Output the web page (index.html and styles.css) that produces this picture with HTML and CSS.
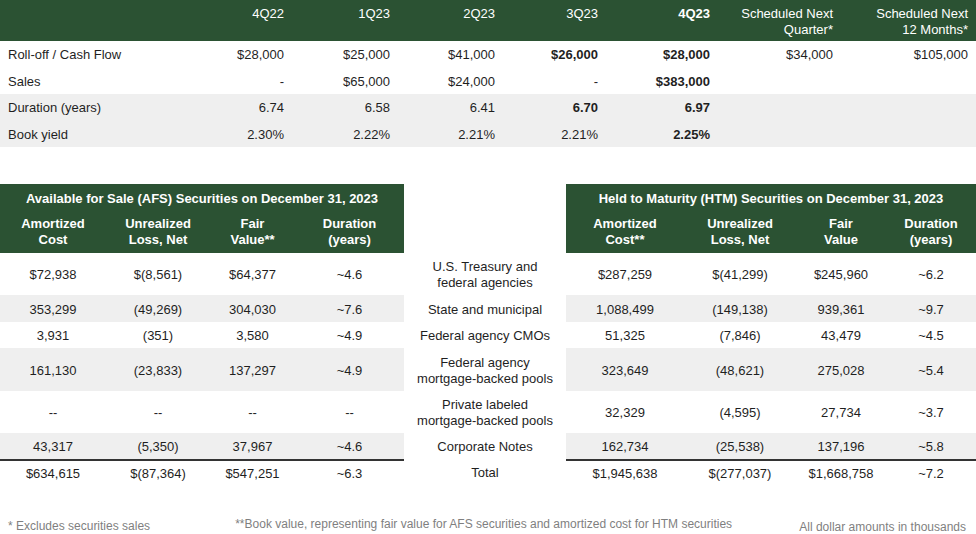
FILE: index.html
```html
<!DOCTYPE html>
<html>
<head>
<meta charset="utf-8">
<link rel="stylesheet" href="styles.css">
</head>
<body>
<div class="page">
  <div class="summary">
    <div class="srow shead">
      <div></div>
      <div class="num">4Q22</div>
      <div class="num">1Q23</div>
      <div class="num">2Q23</div>
      <div class="num">3Q23</div>
      <div class="num b">4Q23</div>
      <div class="num">Scheduled Next<br>Quarter*</div>
      <div class="num">Scheduled Next<br>12 Months*</div>
    </div>
    <div class="srow h26">
      <div>Roll-off / Cash Flow</div>
      <div class="num">$28,000</div>
      <div class="num">$25,000</div>
      <div class="num">$41,000</div>
      <div class="num b">$26,000</div>
      <div class="num b">$28,000</div>
      <div class="num">$34,000</div>
      <div class="num">$105,000</div>
    </div>
    <div class="srow h27">
      <div>Sales</div>
      <div class="num">-</div>
      <div class="num">$65,000</div>
      <div class="num">$24,000</div>
      <div class="num">-</div>
      <div class="num b">$383,000</div>
      <div></div>
      <div></div>
    </div>
    <div class="srow h26 alt">
      <div>Duration (years)</div>
      <div class="num">6.74</div>
      <div class="num">6.58</div>
      <div class="num">6.41</div>
      <div class="num b">6.70</div>
      <div class="num b">6.97</div>
      <div></div>
      <div></div>
    </div>
    <div class="srow h27 alt">
      <div>Book yield</div>
      <div class="num">2.30%</div>
      <div class="num">2.22%</div>
      <div class="num">2.21%</div>
      <div class="num">2.21%</div>
      <div class="num b">2.25%</div>
      <div></div>
      <div></div>
    </div>
  </div>

  <div class="sec">
    <div class="c g title afs-title">Available for Sale (AFS) Securities on December 31, 2023</div>
    <div class="c"></div>
    <div class="c g title htm-title">Held to Maturity (HTM) Securities on December 31, 2023</div>

    <div class="c g ch">Amortized<br>Cost</div>
    <div class="c g ch">Unrealized<br>Loss, Net</div>
    <div class="c g ch">Fair<br>Value**</div>
    <div class="c g ch">Duration<br>(years)</div>
    <div class="c"></div>
    <div class="c g ch">Amortized<br>Cost**</div>
    <div class="c g ch">Unrealized<br>Loss, Net</div>
    <div class="c g ch">Fair<br>Value</div>
    <div class="c g ch">Duration<br>(years)</div>

    <div class="c">$72,938</div>
    <div class="c">$(8,561)</div>
    <div class="c">$64,377</div>
    <div class="c">~4.6</div>
    <div class="c lbl">U.S. Treasury and<br>federal agencies</div>
    <div class="c">$287,259</div>
    <div class="c">$(41,299)</div>
    <div class="c">$245,960</div>
    <div class="c">~6.2</div>

    <div class="c a">353,299</div>
    <div class="c a">(49,269)</div>
    <div class="c a">304,030</div>
    <div class="c a">~7.6</div>
    <div class="c lbl">State and municipal</div>
    <div class="c a">1,088,499</div>
    <div class="c a">(149,138)</div>
    <div class="c a">939,361</div>
    <div class="c a">~9.7</div>

    <div class="c">3,931</div>
    <div class="c">(351)</div>
    <div class="c">3,580</div>
    <div class="c">~4.9</div>
    <div class="c lbl">Federal agency CMOs</div>
    <div class="c">51,325</div>
    <div class="c">(7,846)</div>
    <div class="c">43,479</div>
    <div class="c">~4.5</div>

    <div class="c a">161,130</div>
    <div class="c a">(23,833)</div>
    <div class="c a">137,297</div>
    <div class="c a">~4.9</div>
    <div class="c lbl">Federal agency<br>mortgage-backed pools</div>
    <div class="c a">323,649</div>
    <div class="c a">(48,621)</div>
    <div class="c a">275,028</div>
    <div class="c a">~5.4</div>

    <div class="c">--</div>
    <div class="c">--</div>
    <div class="c">--</div>
    <div class="c">--</div>
    <div class="c lbl">Private labeled<br>mortgage-backed pools</div>
    <div class="c">32,329</div>
    <div class="c">(4,595)</div>
    <div class="c">27,734</div>
    <div class="c">~3.7</div>

    <div class="c a">43,317</div>
    <div class="c a">(5,350)</div>
    <div class="c a">37,967</div>
    <div class="c a">~4.6</div>
    <div class="c lbl">Corporate Notes</div>
    <div class="c a">162,734</div>
    <div class="c a">(25,538)</div>
    <div class="c a">137,196</div>
    <div class="c a">~5.8</div>

    <div class="c t">$634,615</div>
    <div class="c t">$(87,364)</div>
    <div class="c t">$547,251</div>
    <div class="c t">~6.3</div>
    <div class="c lbl">Total</div>
    <div class="c t">$1,945,638</div>
    <div class="c t">$(277,037)</div>
    <div class="c t">$1,668,758</div>
    <div class="c t">~7.2</div>
  </div>

  <div class="foot">
    <span class="f1">* Excludes securities sales</span>
    <span class="f2">**Book value, representing fair value for AFS securities and amortized cost for HTM securities</span>
    <span class="f3">All dollar amounts in thousands</span>
  </div>
</div>
</body>
</html>
```

FILE: styles.css
```css
html, body {
  margin: 0;
  padding: 0;
  background: #ffffff;
}
body {
  font-family: "Liberation Sans", Arial, sans-serif;
  font-size: 13px;
  color: #1f1f1f;
}
.page {
  width: 976px;
  height: 534px;
  overflow: hidden;
}
.summary {
  display: flex;
  flex-direction: column;
}
.srow {
  display: grid;
  grid-template-columns: 170px 106px 106px 105px 103px 112px 123px 135px;
  padding: 2px 8px 0 8px;
  box-sizing: border-box;
  align-items: center;
  line-height: 16px;
}
.shead {
  background: #2b5233;
  color: #ffffff;
  height: 41px;
  align-items: start;
  padding-top: 6px;
}
.h26 { height: 26px; }
.h27 { height: 27px; }
.alt { background: #efefef; }
.num { text-align: right; }
.b { font-weight: bold; }

.sec {
  margin-top: 37px;
  display: grid;
  grid-template-columns: 106px 104px 85px 109px 162px 118px 112px 90px 90px;
  grid-template-rows: 26px 43px 42px 27px 26px 43px 42px 26px 26px;
  line-height: 16px;
}
.c {
  display: flex;
  align-items: center;
  justify-content: center;
  text-align: center;
  padding-top: 2px;
  box-sizing: border-box;
}
.g {
  background: #2b5233;
  color: #ffffff;
  font-weight: bold;
}
.title {
  padding-top: 3px;
}
.afs-title { grid-column: 1 / 5; }
.htm-title { grid-column: 6 / 10; }
.ch {
  padding-top: 1px;
}
.a { background: #efefef; }
.t {
  border-top: 2px solid #333333;
  padding-top: 1px;
}
.lbl { padding-left: 4px; padding-right: 4px; }

.foot {
  margin-top: 34px;
  display: flex;
  justify-content: space-between;
  align-items: center;
  padding: 0 10px 0 8px;
  font-size: 12px;
  color: #7f7f7f;
}
.f2 { position: relative; top: -2px; margin-left: 18px; }
.f3 { position: relative; top: 1px; }
```
